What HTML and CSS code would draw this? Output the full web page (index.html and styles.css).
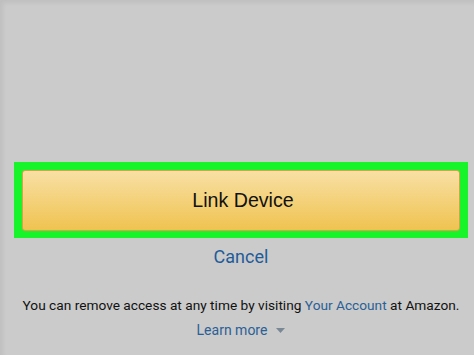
FILE: index.html
```html
<!DOCTYPE html>
<html>
<head>
<meta charset="utf-8">
<link rel="stylesheet" href="styles.css">
</head>
<body>
<div class="screen">
  <div class="spacer"></div>
  <div class="highlight">
    <button class="link-btn">Link Device</button>
  </div>
  <a class="cancel">Cancel</a>
  <p class="note">You can remove access at any time by visiting <a class="inline-link">Your Account</a> at Amazon.</p>
  <div class="learn"><a class="inline-link">Learn more</a><svg class="caret" width="9" height="5" viewBox="0 0 9 5"><path d="M0 0H9L4.5 5Z" fill="#7a8794"/></svg></div>
</div>
</body>
</html>
```
FILE: styles.css
```css
html, body {
  margin: 0;
  padding: 0;
  background: #cbcbcb;
}
.screen {
  width: 474px;
  height: 355px;
  box-sizing: border-box;
  display: flex;
  flex-direction: column;
  align-items: center;
  font-family: Roboto, "Liberation Sans", sans-serif;
  box-shadow: inset 3px 3px 4px rgba(0,0,0,0.06);
  overflow: hidden;
}
.spacer {
  height: 162px;
  flex: none;
}
.highlight {
  width: 454px;
  height: 76px;
  box-sizing: border-box;
  background: #17f52a;
  padding: 8px 8px 7px 8px;
  align-self: flex-start;
  margin-left: 14px;
}
.link-btn {
  width: 100%;
  height: 100%;
  box-sizing: border-box;
  border: 1px solid #d9a24a;
  border-radius: 3px;
  background: linear-gradient(#f8e0a5, #f0c350);
  font-family: "Liberation Sans", Arial, sans-serif;
  font-size: 19.6px;
  color: #111;
  padding: 0 0 1px 4px;
  display: flex;
  align-items: center;
  justify-content: center;
}
.cancel {
  margin-top: 8px;
  margin-left: 8px;
  font-size: 18px;
  color: #1f5c99;
  line-height: 22px;
}
.note {
  margin: 28px 0 0 8px;
  font-size: 13.7px;
  line-height: 18px;
  color: #111;
  white-space: nowrap;
}
.inline-link {
  color: #2a6096;
}
.learn {
  margin: 7px 0 0 8px;
  font-size: 14px;
  line-height: 18px;
  display: flex;
  align-items: center;
  gap: 9px;
}
.caret {
  display: block;
}
```
